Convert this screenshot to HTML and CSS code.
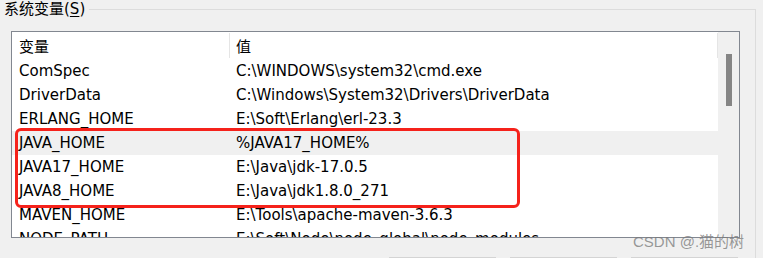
FILE: index.html
```html
<!DOCTYPE html>
<html lang="zh-CN">
<head>
    <meta charset="UTF-8">
    <meta name="viewport" content="width=device-width, initial-scale=1.0">
    <title>系统变量</title>
    <link rel="stylesheet" href="styles.css">
</head>
<body>
    <fieldset class="group">
        <legend>系统变量(<u>S</u>)</legend>

        <div class="listbox">
            <div class="table">
                <div class="row head">
                    <div class="cell">变量</div>
                    <div class="cell val">值</div>
                </div>
                <div class="row"><div class="cell">ComSpec</div><div class="cell val">C:\WINDOWS\system32\cmd.exe</div></div>
                <div class="row"><div class="cell">DriverData</div><div class="cell val">C:\Windows\System32\Drivers\DriverData</div></div>
                <div class="row"><div class="cell">ERLANG_HOME</div><div class="cell val">E:\Soft\Erlang\erl-23.3</div></div>
                <div class="row selected"><div class="cell">JAVA_HOME</div><div class="cell val">%JAVA17_HOME%</div></div>
                <div class="row"><div class="cell">JAVA17_HOME</div><div class="cell val">E:\Java\jdk-17.0.5</div></div>
                <div class="row"><div class="cell">JAVA8_HOME</div><div class="cell val">E:\Java\jdk1.8.0_271</div></div>
                <div class="row"><div class="cell">MAVEN_HOME</div><div class="cell val">E:\Tools\apache-maven-3.6.3</div></div>
                <div class="row"><div class="cell">NODE_PATH</div><div class="cell val">E:\Soft\Node\node_global\node_modules</div></div>
            </div>
            <div class="scrollbar"><div class="thumb"></div></div>
        </div>

        <!-- only the top edge of the buttons shows in the frame -->
        <div class="buttons">
            <button></button>
            <button></button>
            <button></button>
        </div>
    </fieldset>

    <!-- annotation drawn over the list -->
    <div class="highlight-box"></div>
    <div class="watermark">CSDN @.猫的树</div>
</body>
</html>
```

FILE: styles.css
```css
html, body {
    margin: 0;
    height: 100%;
}
body {
    background: #f0f0f0;
    font-family: "DejaVu Sans", "Noto Sans CJK SC", sans-serif;
    font-size: 15px;
    color: #000;
    overflow: hidden;
    position: relative;
}
.group {
    margin: 0;
    padding: 12px 0 0 0;
    width: 756px;
    min-height: 300px;
    box-sizing: border-box;
    border: 1px solid #dcdcdc;
    border-left: none;
    border-bottom: none;
}
.group legend {
    margin-left: 0;
    padding: 0 4px;
    line-height: 19px;
    height: 19px;
}
.group legend u {
    text-underline-offset: 2px;
}
.listbox {
    display: flex;
    width: 729px;
    height: 207px;
    margin-left: 11px;
    box-sizing: border-box;
    border: 1px solid #828790;
    background: #fff;
    overflow: hidden;
}
.table {
    flex: 1;
    min-width: 0;
}
.row {
    display: grid;
    grid-template-columns: 217px 1fr;
    height: 24px;
    line-height: 24px;
}
.row.selected {
    background: #f0f0f0;
}
.cell {
    padding-left: 7px;
    white-space: nowrap;
    overflow: hidden;
}
.head {
    height: 27px;
    padding: 1px 0;
    box-sizing: border-box;
}
.head .cell {
    padding-top: 3px;
    line-height: 22px;
}
.head .val {
    padding-left: 6px;
    border-left: 1px solid #e5e5e5;
    border-right: 1px solid #e5e5e5;
}
.scrollbar {
    width: 21px;
    flex: none;
    background: #f0f0f0;
    display: flex;
    justify-content: center;
}
.thumb {
    width: 6px;
    height: 52px;
    margin-top: 22px;
    background: #858585;
}
.buttons {
    display: flex;
    justify-content: flex-end;
    gap: 14px;
    width: 727px;
    margin: 19px 0 0 11px;
}
.buttons button {
    width: 107px;
    height: 28px;
    border: 1px solid #d4d4d4;
    background: #e8e8e8;
}
.highlight-box {
    position: absolute;
    left: 15px;
    top: 128px;
    width: 505px;
    height: 80px;
    box-sizing: border-box;
    border: 3px solid #f5221b;
    border-radius: 6px;
}
.watermark {
    position: absolute;
    left: 633px;
    top: 232px;
    line-height: 20px;
    font-size: 15px;
    color: rgba(120, 120, 120, 0.75);
    font-family: "Liberation Sans", "Noto Sans CJK SC", sans-serif;
}
```
